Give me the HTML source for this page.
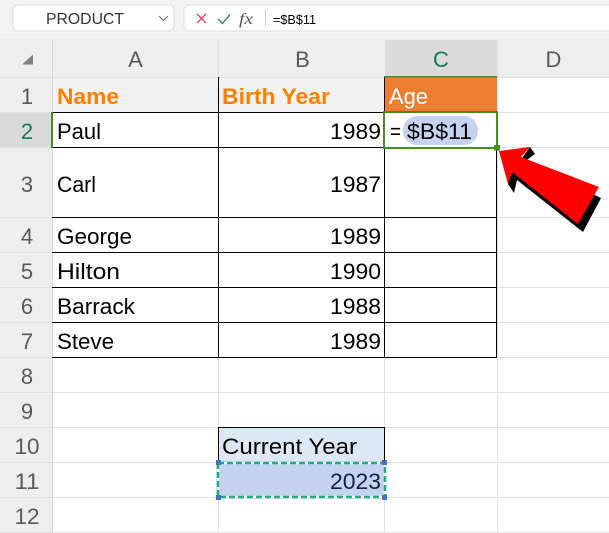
<!DOCTYPE html>
<html><head><meta charset="utf-8"><style>
html,body{margin:0;padding:0;background:#fff;width:609px;height:533px;overflow:hidden}
svg{display:block}
text{font-family:"Liberation Sans",sans-serif}
.c{font-size:22px;fill:#000}
.h{font-size:22px;fill:#595959;text-anchor:middle}
</style></head><body>
<svg width="609" height="533" viewBox="0 0 609 533" xmlns="http://www.w3.org/2000/svg">
<rect width="609" height="533" fill="#fff"/>
<!-- toolbar + header backgrounds -->
<rect width="609" height="40" fill="#f3f3f3"/>
<rect y="39" width="609" height="38" fill="#eeeeee"/>
<rect y="40" width="52" height="493" fill="#eeeeee"/>
<rect x="52" y="77" width="333" height="35" fill="#f2f2f2"/>
<rect x="385" y="40" width="112" height="37" fill="#dadada"/>
<rect y="112" width="52" height="36" fill="#dadada"/>
<!-- name box -->
<rect x="13" y="5" width="161" height="26" rx="5" fill="#fff" stroke="#dcdcdc"/>
<text x="46" y="24" font-size="15.5" fill="#333" textLength="78" lengthAdjust="spacingAndGlyphs">PRODUCT</text>
<path d="M159 16l4.500 4.500 4.500-4.500" fill="none" stroke="#777" stroke-width="1.200"/>
<!-- formula box -->
<rect x="184" y="5" width="440" height="26" rx="5" fill="#fff" stroke="#dcdcdc"/>
<path d="M197 14l9 9M206 14l-9 9" stroke="#d2476b" stroke-width="1.400" fill="none"/>
<path d="M218 19l4.500 4.500 7.500-9" stroke="#2d8a70" stroke-width="1.400" fill="none"/>
<text x="239" y="24" font-style="italic" font-size="16" fill="#555" textLength="14" lengthAdjust="spacingAndGlyphs" style="font-family:'Liberation Serif',serif">fx</text>
<rect x="265" y="10" width="1" height="16" fill="#c8c8c8"/>
<text x="273" y="24" font-size="12.500" fill="#000" textLength="43" lengthAdjust="spacingAndGlyphs">=$B$11</text>
<!-- corner triangle -->
<path d="M22 64.500l11-10v10z" fill="#7f7f7f"/>
<!-- gridlines -->
<g stroke="#e1e1e1" stroke-width="1" fill="none">
<path d="M218.500 40v37M52.500 77v456M497.500 40v493M384.500 357v70M218.500 357v70M218.500 497v36M384.500 497v36"/>
<path d="M0 77.500h609M0 112.500h52M0 147.500h52M0 217.500h52M0 252.500h52M0 287.500h52M0 322.500h52M0 357.500h52M0 392.500h609M0 427.500h218M385 427.500h224M0 462.500h218M385 462.500h224M0 497.500h218M385 497.500h224M0 532.500h609"/>
<path d="M497 112.500h112M497 147.500h112M497 217.500h112M497 252.500h112M497 287.500h112M497 322.500h112M497 357.500h112"/>
</g>
<path d="M52.500 40V533" stroke="#d4d4d4" fill="none"/>
<!-- C1 orange -->
<rect x="385" y="77" width="112" height="35" fill="#ed7d31"/>
<!-- table borders -->
<g stroke="#000" stroke-width="1" fill="none">
<path d="M52 112.500h445M52 147.500h445M52 217.500h445M52 252.500h445M52 287.500h445M52 322.500h445M52 357.500h445"/>
<path d="M218.500 77v281M384.500 77v281M496.500 112v246"/>
</g>
<!-- column headers -->
<text class="h" x="135.500" y="67">A</text>
<text class="h" x="302.500" y="67">B</text>
<text class="h" x="441" y="67" style="fill:#107c5a">C</text>
<text class="h" x="553.500" y="67">D</text>
<!-- row headers -->
<text class="h" x="27" y="104">1</text>
<text class="h" x="27" y="139" style="fill:#107c5a">2</text>
<text class="h" x="27" y="192">3</text>
<text class="h" x="27" y="244">4</text>
<text class="h" x="27" y="279">5</text>
<text class="h" x="27" y="314">6</text>
<text class="h" x="27" y="349">7</text>
<text class="h" x="27" y="384">8</text>
<text class="h" x="27" y="419">9</text>
<text class="h" x="27" y="454" textLength="25" lengthAdjust="spacingAndGlyphs">10</text>
<text class="h" x="27" y="489" textLength="25" lengthAdjust="spacingAndGlyphs">11</text>
<text class="h" x="27" y="524" textLength="25" lengthAdjust="spacingAndGlyphs">12</text>
<!-- header cells -->
<text class="c" x="57" y="104" font-weight="700" style="fill:#ff7f00" textLength="62" lengthAdjust="spacingAndGlyphs">Name</text>
<text class="c" x="222" y="104" font-weight="700" style="fill:#ff7f00" textLength="108" lengthAdjust="spacingAndGlyphs">Birth Year</text>
<text class="c" x="389" y="104" style="fill:#fff" textLength="39" lengthAdjust="spacingAndGlyphs">Age</text>
<!-- names -->
<text class="c" x="57" y="139" textLength="44" lengthAdjust="spacingAndGlyphs">Paul</text>
<text class="c" x="57" y="192" textLength="39" lengthAdjust="spacingAndGlyphs">Carl</text>
<text class="c" x="57" y="244" textLength="75" lengthAdjust="spacingAndGlyphs">George</text>
<text class="c" x="57" y="279" textLength="63" lengthAdjust="spacingAndGlyphs">Hilton</text>
<text class="c" x="57" y="314" textLength="78" lengthAdjust="spacingAndGlyphs">Barrack</text>
<text class="c" x="57" y="349" textLength="57" lengthAdjust="spacingAndGlyphs">Steve</text>
<!-- years -->
<text class="c" x="330" y="139" textLength="51" lengthAdjust="spacingAndGlyphs">1989</text>
<text class="c" x="330" y="192" textLength="51" lengthAdjust="spacingAndGlyphs">1987</text>
<text class="c" x="330" y="244" textLength="51" lengthAdjust="spacingAndGlyphs">1989</text>
<text class="c" x="330" y="279" textLength="51" lengthAdjust="spacingAndGlyphs">1990</text>
<text class="c" x="330" y="314" textLength="51" lengthAdjust="spacingAndGlyphs">1988</text>
<text class="c" x="330" y="349" textLength="51" lengthAdjust="spacingAndGlyphs">1989</text>
<!-- active cell -->
<rect x="385" y="113" width="112" height="35" fill="#fff"/>
<rect x="403" y="116" width="75" height="29" rx="14" fill="#c5d3f0"/>
<text class="c" x="390" y="139" textLength="11" lengthAdjust="spacingAndGlyphs">=</text>
<text class="c" x="407" y="139" textLength="65" lengthAdjust="spacingAndGlyphs">$B$11</text>
<rect x="384" y="112" width="113" height="36" fill="none" stroke="#44901f" stroke-width="2"/>
<rect x="384" y="76" width="113" height="1.500" fill="#44901f"/>
<rect x="51" y="112" width="2" height="36" fill="#44901f"/>
<rect x="494" y="145" width="6" height="5.500" fill="#44901f"/>
<!-- arrow -->
<path d="M530 147L535 154L524 162L601 198L583 232L517 180L514 193L508 184L512 172Z" fill="#000"/>
<path d="M499 151L530 147L521 157L599 187L578 224L512 172L508 184Z" fill="#f00"/>
<!-- current year -->
<rect x="219" y="428" width="165" height="34" fill="#dce9f5"/>
<path d="M218.500 462V427.500H384.500V462" fill="none" stroke="#000"/>
<text class="c" x="222" y="454" textLength="135" lengthAdjust="spacingAndGlyphs">Current Year</text>
<rect x="218" y="463" width="167" height="34" fill="#c5d3f0"/>
<text class="c" x="330" y="489" style="fill:#16203c" textLength="51" lengthAdjust="spacingAndGlyphs">2023</text>
<rect x="217" y="462" width="168" height="36" fill="none" stroke="#4472c4" stroke-width="1"/>
<rect x="218" y="463" width="167" height="34" fill="none" stroke="#fff" stroke-width="2.500"/>
<rect x="218" y="463" width="167" height="34" fill="none" stroke="#1fae7c" stroke-width="2.500" stroke-dasharray="6 3"/>
<g fill="#4472c4">
<rect x="216" y="460" width="5" height="5"/><rect x="382" y="460" width="5" height="5"/>
<rect x="216" y="495" width="5" height="5"/><rect x="382" y="495" width="5" height="5"/>
</g>
</svg>
</body></html>
